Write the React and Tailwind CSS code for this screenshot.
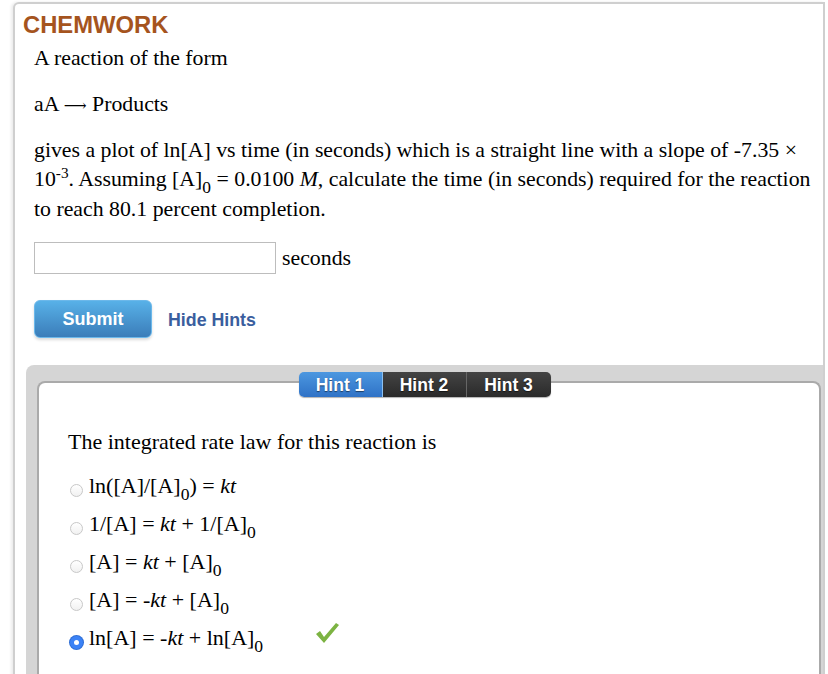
import React from "react";

const serif = { fontFamily: '"Liberation Serif", "Times New Roman", serif' };
const sans = { fontFamily: '"Liberation Sans", Arial, sans-serif' };

function Sub({ children }) {
  return <sub className="text-[0.8em] relative top-[0.12em] align-sub leading-none">{children}</sub>;
}

function Radio({ checked }) {
  if (checked) {
    return (
      <span className="inline-flex w-[13px] h-[13px] rounded-full bg-[#3b82f6] items-center justify-center shrink-0 shadow-[0_0_0_1px_#2f6fd6] mt-[4px]">
        <span className="w-[5px] h-[5px] rounded-full bg-white" />
      </span>
    );
  }
  return (
    <span className="inline-block w-[13px] h-[13px] rounded-full border border-[#c8c8c8] bg-gradient-to-b from-white to-[#f1f1f1] shrink-0 mt-[4px]" />
  );
}

function Option({ checked, children, extra }) {
  return (
    <div className="flex items-center h-[38px]">
      <Radio checked={checked} />
      <span className="ml-[6px] text-[22px] leading-none">{children}</span>
      {extra}
    </div>
  );
}

function Check() {
  return (
    <svg width="26" height="24" viewBox="0 0 26 24" className="ml-[51px] -mt-[14px]">
      <path d="M2 13 L6 10 L10 16 L22 2 L25 4 L10 22 Z" fill="#7cb342" />
    </svg>
  );
}

export default function App() {
  return (
    <div className="bg-white w-[828px] h-[674px] overflow-hidden pt-[2px] pl-[13px]">
      <div className="w-[812px] h-[700px] border-2 border-b-0 border-[#cfcfcf] rounded-tl-[6px] shadow-[-2px_0_3px_rgba(0,0,0,0.08)] bg-white">
        <div className="pl-[8px] pt-[8px] text-[23.8px] font-bold text-[#a5541e] leading-[26px]" style={sans}>
          CHEMWORK
        </div>
        <div className="pl-[19px] pr-[2px] text-black" style={serif}>
          <p className="text-[21.8px] leading-[29px] mt-[6px]">A reaction of the form</p>
          <p className="text-[21.8px] leading-[29px] mt-[17px]">
            aA <span style={{ fontFamily: '"DejaVu Serif", serif' }} className="text-[16px]">⟶</span> Products
          </p>
          <p className="text-[21.8px] leading-[29px] mt-[16px]">
            gives a plot of ln[A] vs time (in seconds) which is a straight line with a slope of -7.35 ×
            10<sup className="text-[0.7em] leading-none">-3</sup>. Assuming [A]<Sub>0</Sub> = 0.0100 <i>M</i>,
            calculate the time (in seconds) required for the reaction to reach 80.1 percent completion.
          </p>
          <div className="flex items-center mt-[18px]">
            <div className="w-[242px] h-[32px] border border-[#bdbdbd] bg-white" />
            <span className="ml-[6px] text-[21.8px]">seconds</span>
          </div>
          <div className="flex items-center mt-[26px]" style={sans}>
            <button className="w-[118px] h-[38px] rounded-[6px] border border-[#6cb8ea] bg-gradient-to-b from-[#58b1e8] to-[#3b7db9] text-white font-bold text-[18px] shadow-[0_2px_3px_rgba(0,0,0,0.15)]">
              Submit
            </button>
            <span className="ml-[16px] text-[17.8px] font-bold text-[#3a5e9e] mt-[2px]">Hide Hints</span>
          </div>
        </div>

        <div className="ml-[11px] mt-[27px] bg-[#d5d5d5] rounded-tl-[8px] pl-[11px] pt-[16px] relative">
          <div
            className="absolute left-1/2 -translate-x-1/2 top-[7px] flex h-[25px] rounded-[5px] overflow-hidden z-10 shadow-[0_1px_1px_rgba(0,0,0,0.3)]"
            style={sans}
          >
            <div className="w-[84px] flex items-center justify-center bg-gradient-to-b from-[#4c97e0] to-[#2f72c6] text-white font-bold text-[17.5px] [text-shadow:0_1px_1px_rgba(0,0,0,0.5)] border-r border-[#8cc0f0]">
              Hint 1
            </div>
            <div className="w-[84px] flex items-center justify-center bg-gradient-to-b from-[#444] to-[#2a2a2a] text-white font-bold text-[17.5px] [text-shadow:0_1px_1px_rgba(0,0,0,0.6)] border-r border-[#666]">
              Hint 2
            </div>
            <div className="w-[84px] flex items-center justify-center bg-gradient-to-b from-[#444] to-[#2a2a2a] text-white font-bold text-[17.5px] [text-shadow:0_1px_1px_rgba(0,0,0,0.6)]">
              Hint 3
            </div>
          </div>
          <div
            className="bg-white border-l-2 border-t-2 border-r-2 border-[#aaaaaa] rounded-t-[8px] h-[300px] pl-[29px] pt-[44px] mr-[2px]"
            style={serif}
          >
            <p className="text-[22px] leading-[29px]">The integrated rate law for this reaction is</p>
            <div className="mt-[13px] pl-[2px]">
              <Option>
                ln([A]/[A]<Sub>0</Sub>) = <i>kt</i>
              </Option>
              <Option>
                1/[A] = <i>kt</i> + 1/[A]<Sub>0</Sub>
              </Option>
              <Option>
                [A] = <i>kt</i> + [A]<Sub>0</Sub>
              </Option>
              <Option>
                [A] = -<i>kt</i> + [A]<Sub>0</Sub>
              </Option>
              <Option checked extra={<Check />}>
                ln[A] = -<i>kt</i> + ln[A]<Sub>0</Sub>
              </Option>
            </div>
          </div>
        </div>
      </div>
    </div>
  );
}
